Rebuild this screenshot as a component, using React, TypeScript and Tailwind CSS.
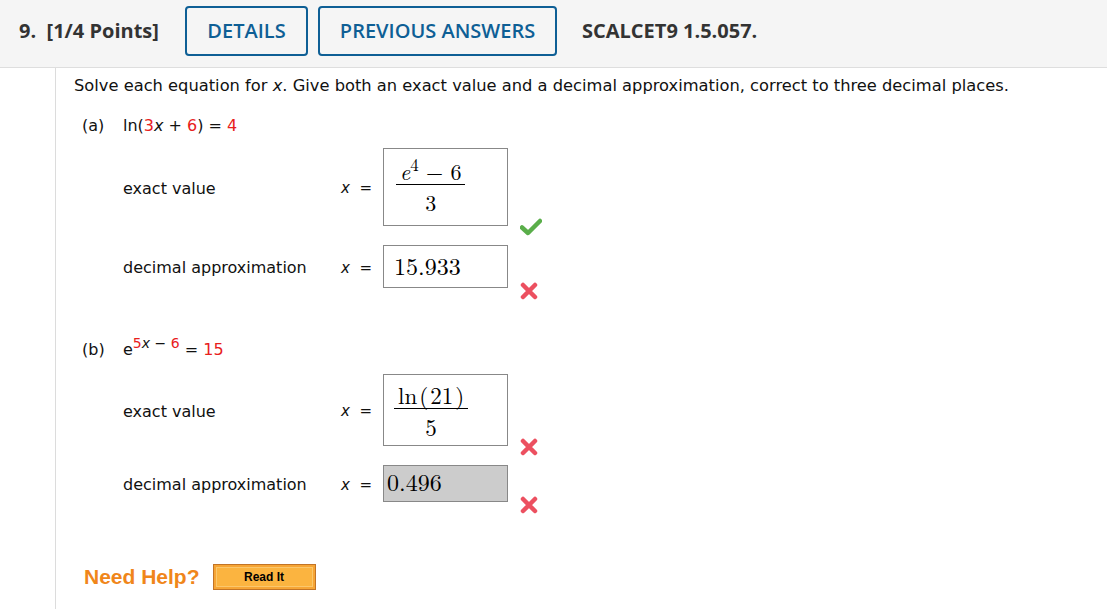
import React from "react";

const verdana = { fontFamily: '"DejaVu Sans", Verdana, sans-serif' };
const serif = { fontFamily: '"Latin Modern Roman", "DejaVu Serif", serif' };

function Check() {
  return (
    <svg width="22" height="18" viewBox="0 0 22 18">
      <path d="M2 9.5 L8 15 L20 3" fill="none" stroke="#5aae4a" strokeWidth="4.5" strokeLinecap="round" strokeLinejoin="round" />
    </svg>
  );
}

function Cross() {
  return (
    <svg width="18" height="18" viewBox="0 0 18 18">
      <path d="M3 3 L15 15 M15 3 L3 15" fill="none" stroke="#ec5060" strokeWidth="4.5" strokeLinecap="round" />
    </svg>
  );
}

function Frac({ top, bottom }: { top: React.ReactNode; bottom: React.ReactNode }) {
  return (
    <span className="inline-flex flex-col items-center" style={serif}>
      <span className="px-1 pb-[2px] border-b border-black leading-none">{top}</span>
      <span className="pt-[6px] leading-none">{bottom}</span>
    </span>
  );
}

function AnswerRow({
  label,
  box,
  boxClass,
  mark,
  markClass,
}: {
  label: string;
  box: React.ReactNode;
  boxClass: string;
  mark: React.ReactNode;
  markClass: string;
}) {
  return (
    <div className="flex items-center">
      <div className="w-[218px] pt-[3px] text-[16px] text-[#111]">{label}</div>
      <div className="w-[42px] pt-[3px] text-[15px] text-[#111]">
        <i>x</i>&nbsp; =
      </div>
      <div className={boxClass}>{box}</div>
      <div className={markClass}>{mark}</div>
    </div>
  );
}

export default function App() {
  return (
    <div className="w-[1107px] h-[609px] bg-white overflow-hidden">
      {/* header */}
      <div
        className="h-[68px] bg-[#f5f5f5] border-b border-[#dedede] flex items-start pt-[6px] pl-[19px] text-[20px]"
        style={{ fontFamily: '"Open Sans", sans-serif' }}
      >
        <span className="font-bold text-[#333] w-[166px] leading-[50px]">9.&nbsp; [1/4 Points]</span>
        <button className="h-[50px] w-[123px] border-2 border-[#0e5f95] rounded-[4px] text-[#0e5f95] font-semibold">
          DETAILS
        </button>
        <button className="ml-[10px] h-[50px] w-[239px] border-2 border-[#0e5f95] rounded-[4px] text-[#0e5f95] font-semibold">
          PREVIOUS ANSWERS
        </button>
        <span className="ml-[25px] font-bold text-[#333] leading-[50px]">SCALCET9 1.5.057.</span>
      </div>

      {/* body */}
      <div className="ml-[55px] border-l border-[#dcdcdc] h-[541px] pl-[18px] pt-[6px]" style={verdana}>
        <p className="text-[16.3px] text-[#111] leading-[24px]">
          Solve each equation for <i>x</i>. Give both an exact value and a decimal approximation, correct to three decimal places.
        </p>

        {/* part a */}
        <div className="mt-[16px] ml-[8px] text-[16px] text-[#111] flex">
          <span className="w-[41px]">(a)</span>
          <span>
            ln(<span className="text-[#e8201c]">3</span><i>x</i> + <span className="text-[#e8201c]">6</span>) ={" "}
            <span className="text-[#e8201c]">4</span>
          </span>
        </div>

        <div className="ml-[49px] mt-[10px] flex flex-col gap-[19px]">
          <AnswerRow
            label="exact value"
            boxClass="w-[125px] h-[78px] border border-[#888] flex items-center pl-[12px] pb-[2px] text-[22px] text-black"
            box={
              <Frac
                top={
                  <span>
                    <i>e</i>
                    <sup className="text-[17px]">4</sup> − 6
                  </span>
                }
                bottom="3"
              />
            }
            markClass="ml-[12px] self-end mb-[-10px]"
            mark={<Check />}
          />
          <AnswerRow
            label="decimal approximation"
            boxClass="w-[125px] h-[43px] border border-[#888] flex items-center pl-[10px] pb-[4px] text-[24px] text-black"
            box={<span style={serif}>15.933</span>}
            markClass="ml-[12px] self-end mb-[-12px]"
            mark={<Cross />}
          />
        </div>

        {/* part b */}
        <div className="mt-[50px] ml-[8px] text-[16px] text-[#111] flex">
          <span className="w-[41px]">(b)</span>
          <span>
            e
            <sup className="text-[14px] relative top-[-7px]">
              <span className="text-[#e8201c]">5</span>
              <i>x</i> − <span className="text-[#e8201c]">6</span>
            </sup>{" "}
            = <span className="text-[#e8201c]">15</span>
          </span>
        </div>

        <div className="ml-[49px] mt-[12px] flex flex-col gap-[19px]">
          <AnswerRow
            label="exact value"
            boxClass="w-[125px] h-[72px] border border-[#888] flex items-center pl-[10px] text-[23px] text-black"
            box={<Frac top={<span>ln<span className="mx-[2px]">(</span>21<span className="ml-[2px]">)</span></span>} bottom="5" />}
            markClass="ml-[12px] self-end mb-[-10px]"
            mark={<Cross />}
          />
          <AnswerRow
            label="decimal approximation"
            boxClass="w-[125px] h-[37px] border border-[#888] bg-[#cccccc] flex items-center pl-[3px] pb-[6px] text-[24px] text-black"
            box={<span style={serif}>0.496</span>}
            markClass="ml-[12px] self-end mb-[-12px]"
            mark={<Cross />}
          />
        </div>

        {/* help */}
        <div className="mt-[59px] ml-[10px] flex items-center" style={{ fontFamily: '"Liberation Sans", Arial, sans-serif' }}>
          <span className="text-[21px] font-bold text-[#f0861a]">Need Help?</span>
          <button className="ml-[13px] w-[103px] h-[26px] bg-[#f6a535] border border-[#c27426] p-[2px]">
            <span className="block h-full border border-[#fbc76c] bg-[#fbb440] text-[12px] font-bold text-black leading-[18px]">
              Read It
            </span>
          </button>
        </div>
      </div>
    </div>
  );
}
